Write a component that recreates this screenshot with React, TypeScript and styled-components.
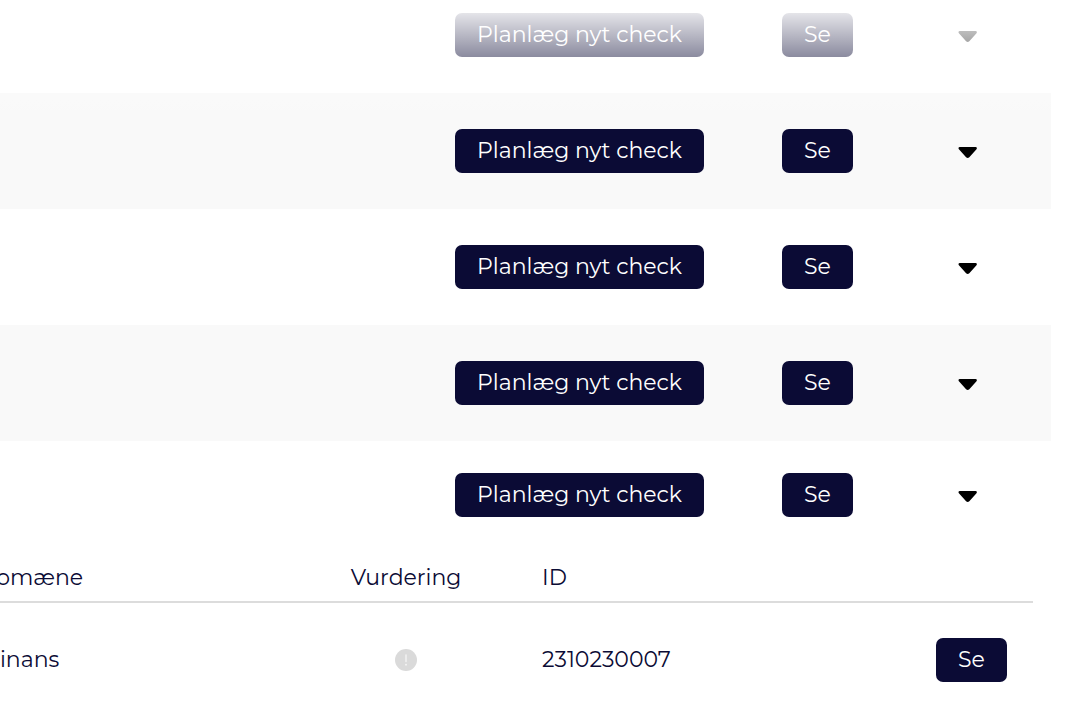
import React from "react";
import styled, { createGlobalStyle } from "styled-components";

const GlobalStyle = createGlobalStyle`
  * { box-sizing: border-box; }
  body {
    margin: 0;
    background: #ffffff;
    color: #0b0b35;
    font-family: Montserrat, Inter, sans-serif;
    font-size: 22px;
    line-height: 28px;
    font-weight: 400;
  }
`;

const Page = styled.main`
  position: relative;
  display: flow-root;
  overflow: hidden;
`;

const TopFade = styled.div`
  position: absolute;
  inset: 0 0 auto;
  height: 120px;
  background: linear-gradient(#ffffff, rgba(255, 255, 255, 0));
  pointer-events: none;
`;

const CheckPanel = styled.section`
  margin: -23px 29px 0 0;
`;

const DetailPanel = styled.section`
  margin: 0 47px 0 -22px;
`;

const Table = styled.table`
  width: 100%;
  table-layout: fixed;
  border-collapse: separate;
  border-spacing: 0;
`;

const Column = styled.col<{ $width?: number }>`
  width: ${({ $width }) => ($width ? `${$width}px` : "auto")};
`;

const CheckRow = styled.tr<{ $open?: boolean }>`
  height: ${({ $open }) => ($open ? 108 : 116)}px;

  &:nth-child(even) {
    background: #f9f9f9;
  }
`;

const Cell = styled.td<{ $align?: "left" | "center"; $inset?: boolean }>`
  padding: 0 0 0 ${({ $inset }) => ($inset ? 8 : 0)}px;
  text-align: ${({ $align }) => $align ?? "left"};
  vertical-align: middle;
`;

const DetailHead = styled.th<{ $align?: "left" | "center" }>`
  padding: 15px 0 9px;
  border-bottom: 2px solid #dcdcdc;
  text-align: ${({ $align }) => $align ?? "left"};
  font-weight: 400;
`;

const DetailRow = styled.tr`
  height: 114px;
`;

const Button = styled.button<{ $wide?: boolean }>`
  display: inline-flex;
  align-items: center;
  justify-content: center;
  vertical-align: middle;
  width: ${({ $wide }) => ($wide ? 249 : 71)}px;
  height: 44px;
  padding: 0;
  border: 0;
  border-radius: 7px;
  background: #0b0b35;
  color: #ffffff;
  font: inherit;
  white-space: nowrap;
  cursor: pointer;
`;

const CaretButton = styled.button`
  display: inline-flex;
  align-items: center;
  justify-content: center;
  vertical-align: middle;
  width: 44px;
  height: 44px;
  padding: 0;
  border: 0;
  background: none;
  color: #000000;
  cursor: pointer;
`;

const StatusIcon = styled.svg`
  display: block;
  margin: 0 auto;
`;

const Caret = () => (
  <svg width="20" height="16" viewBox="0 0 20 16" aria-hidden="true">
    <path
      d="M1.8 4H17.6C18.9 4 19.3 5.5 18.5 6.3L11.3 14.2Q9.7 15.7 8.1 14.2L.9 6.3C.1 5.5 .5 4 1.8 4Z"
      fill="currentColor"
    />
  </svg>
);

const checks = [1, 2, 3, 4, 5];

export default function App() {
  return (
    <Page>
      <GlobalStyle />
      <CheckPanel>
        <Table>
          <colgroup>
            <Column />
            <Column $width={343} />
            <Column $width={133} />
            <Column $width={167} />
          </colgroup>
          <tbody>
            {checks.map((id) => (
              <CheckRow key={id} $open={id === checks.length}>
                <Cell />
                <Cell $align="center">
                  <Button $wide type="button">Planlæg nyt check</Button>
                </Cell>
                <Cell $align="center">
                  <Button type="button">Se</Button>
                </Cell>
                <Cell $align="center">
                  <CaretButton type="button" aria-expanded={id === checks.length} aria-label="Detaljer">
                    <Caret />
                  </CaretButton>
                </Cell>
              </CheckRow>
            ))}
          </tbody>
        </Table>
      </CheckPanel>

      <DetailPanel>
        <Table>
          <colgroup>
            <Column />
            <Column $width={272} />
            <Column $width={368} />
            <Column $width={123} />
          </colgroup>
          <thead>
            <tr>
              <DetailHead scope="col">Domæne</DetailHead>
              <DetailHead scope="col" $align="center">Vurdering</DetailHead>
              <DetailHead scope="col">ID</DetailHead>
              <DetailHead />
            </tr>
          </thead>
          <tbody>
            <DetailRow>
              <Cell $inset>Finans</Cell>
              <Cell $align="center">
                <StatusIcon width="22" height="22" viewBox="0 0 22 22" role="img" aria-label="Ikke vurderet">
                  <circle cx="11" cy="11" r="11" fill="#dadada" />
                  <path d="M11 6V12.6" stroke="#f6f6f6" strokeWidth="1.3" strokeLinecap="round" />
                  <circle cx="11" cy="15.7" r="0.9" fill="#f6f6f6" />
                </StatusIcon>
              </Cell>
              <Cell>2310230007</Cell>
              <Cell $align="center">
                <Button type="button">Se</Button>
              </Cell>
            </DetailRow>
          </tbody>
        </Table>
      </DetailPanel>
      <TopFade />
    </Page>
  );
}
